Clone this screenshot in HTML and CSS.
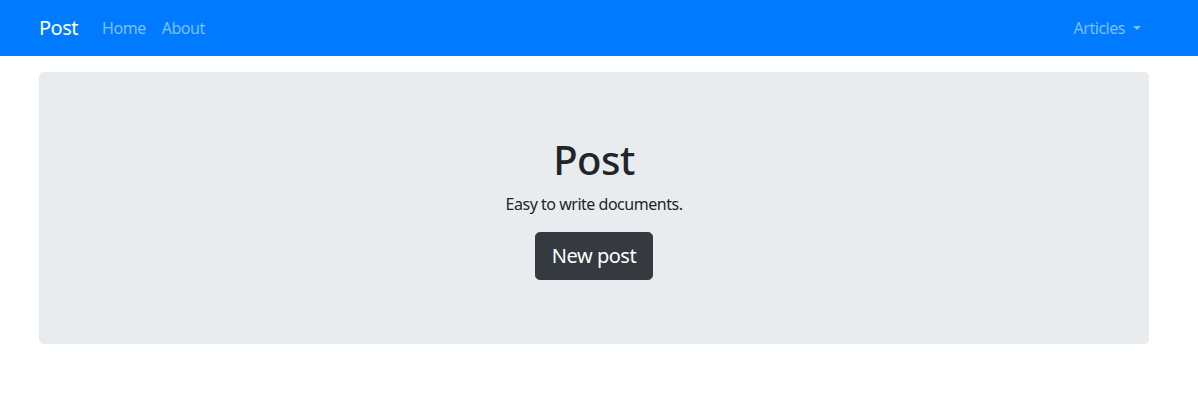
FILE: index.html
```html
<!DOCTYPE html>
<html lang="en">
<head>
    <meta charset="UTF-8">
    <meta name="viewport" content="width=device-width, initial-scale=1.0">
    <title>Post</title>
    <link rel="stylesheet" href="styles.css">
</head>
<body>
    <nav class="navbar">
        <div class="navbar-inner">
            <a class="brand" href="#">Post</a>
            <ul class="nav-links">
                <li><a class="nav-link" href="#">Home</a></li>
                <li><a class="nav-link" href="#">About</a></li>
            </ul>
            <ul class="nav-links nav-right">
                <li><a class="nav-link dropdown-toggle" href="#">Articles</a></li>
            </ul>
        </div>
    </nav>

    <main class="container">
        <div class="jumbotron">
            <h1>Post</h1>
            <p>Easy to write documents.</p>
            <a class="btn-dark" href="#">New post</a>
        </div>
    </main>
</body>
</html>
```

FILE: styles.css
```css
* {
    margin: 0;
    padding: 0;
    box-sizing: border-box;
}

body {
    font-family: 'Noto Sans', 'Open Sans', sans-serif;
    font-size: 16px;
    line-height: 1.5;
    letter-spacing: -0.03em;
    color: #212529;
    background: #fff;
}

a {
    text-decoration: none;
}

.navbar {
    background: #007bff;
    padding: 8px 0;
}

.navbar-inner {
    display: flex;
    align-items: center;
    margin-left: 39px;
    width: 1110px;
}

.brand {
    color: #fff;
    font-size: 20px;
    line-height: 30px;
    padding: 5px 0;
    margin-right: 16px;
}

.nav-links {
    display: flex;
    list-style: none;
}

.nav-right {
    margin-left: auto;
}

.nav-link {
    display: block;
    padding: 8px;
    color: rgba(255, 255, 255, 0.5);
}

.dropdown-toggle::after {
    content: "";
    display: inline-block;
    margin-left: 0.5em;
    vertical-align: 0.255em;
    border-top: 0.3em solid;
    border-right: 0.3em solid transparent;
    border-left: 0.3em solid transparent;
}

.container {
    margin-left: 39px;
    width: 1110px;
    padding-top: 16px;
}

.jumbotron {
    background: #e9ecef;
    border-radius: 4.8px;
    padding: 64px 32px;
    text-align: center;
}

.jumbotron h1 {
    font-size: 40px;
    font-weight: 500;
    line-height: 1.2;
    margin-bottom: 8px;
}

.jumbotron p {
    margin-bottom: 16px;
}

.btn-dark {
    display: inline-block;
    background: #343a40;
    border: 1px solid #343a40;
    color: #fff;
    font-size: 20px;
    line-height: 1.5;
    padding: 8px 16px;
    border-radius: 4.8px;
}
```
